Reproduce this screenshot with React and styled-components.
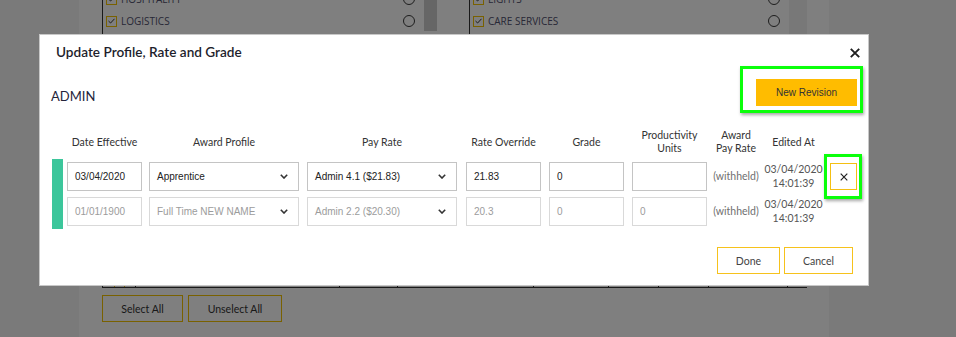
import React from 'react';
import styled, { createGlobalStyle } from 'styled-components';

const Global = createGlobalStyle`
  html, body { margin: 0; padding: 0; }
  body {
    background: #f4f4f4;
    width: 956px;
    height: 337px;
    overflow: hidden;
    font-family: Lato, "Open Sans", sans-serif;
  }
  * { box-sizing: border-box; }
`;

const Page = styled.div`
  position: relative;
  width: 956px;
  height: 337px;
  overflow: hidden;
  display: flex;
`;

/* ---------- background page ---------- */
const Panel = styled.div`
  margin-left: 79px;
  width: 750px;
  height: 337px;
  background: #fff;
  display: flex;
  flex-direction: column;
  padding: 0 0 15px 23px;
`;

const Lists = styled.div`
  display: flex;
  margin-top: -12px;
  height: 70px;
`;

const ListBox = styled.div`
  display: flex;
  width: ${p => p.$w}px;
  border-left: 1px solid #333;
`;

const ListRows = styled.div`
  width: ${p => p.$w}px;
  display: flex;
  flex-direction: column;
`;

const ListRow = styled.div`
  height: 22px;
  display: flex;
  align-items: center;
  padding: 0 9px 0 3px;
`;

const Check = styled.span`
  width: 11px;
  height: 11px;
  border: 1px solid #f2c300;
  display: flex;
  align-items: center;
  justify-content: center;
  flex: none;
`;

const ListLabel = styled.span`
  margin-left: 4px;
  flex: 1;
  font: 10px "Open Sans", sans-serif;
  color: #50506e;
  text-transform: uppercase;
  white-space: nowrap;
`;

const Radio = styled.span`
  width: 12px;
  height: 12px;
  border: 1px solid #3a3a3a;
  border-radius: 50%;
  flex: none;
`;

const ScrollTrack = styled.div`
  width: ${p => p.$w}px;
  align-self: flex-start;
  height: ${p => (p.$h ? `${p.$h}px` : '100%')};
  background: ${p => p.$bg};
`;

const Spacer = styled.div`
  flex: 1;
`;

const Tail = styled.div`
  display: flex;
  width: 705px;
  height: 40px;
  border-bottom: 1px solid #333;
`;

const TailCell = styled.div`
  width: ${p => p.$w}px;
  border-left: 1px solid #333;
  display: flex;
  align-items: flex-end;
  padding-left: ${p => p.$pl || 0}px;
  padding-bottom: ${p => p.$pb || 0}px;
`;

const TailCheck = styled.span`
  width: 11px;
  height: 14px;
  border: 1px solid #f2c300;
  border-bottom: none;
`;

const TailLink = styled.span`
  width: 57px;
  height: 2px;
  background: #6a96e8;
`;

const BgButtons = styled.div`
  display: flex;
  gap: 5px;
  margin-top: 7px;
`;

const BgButton = styled.button`
  width: ${p => p.$w}px;
  height: 27px;
  background: #fff;
  border: 1px solid #f2c300;
  font: 10.5px Lato, sans-serif;
  color: #333;
  padding: 0;
`;

const Overlay = styled.div`
  position: absolute;
  inset: 0;
  background: rgba(0, 0, 0, 0.5);
`;

/* ---------- modal ---------- */
const Modal = styled.div`
  position: absolute;
  left: 39px;
  top: 34px;
  width: 830px;
  height: 252px;
  background: #fff;
  border: 1px solid #c8c8c8;
  padding: 0 11px 0 12px;
  display: flex;
  flex-direction: column;
  font-family: Lato, "Open Sans", sans-serif;
  color: #222;
`;

const TitleBar = styled.div`
  display: flex;
  justify-content: space-between;
  align-items: center;
  height: 20px;
  margin-top: 7px;
`;

const Title = styled.h2`
  margin: 0;
  padding-left: 4px;
  font: 600 13.6px/20px Lato, sans-serif;
  color: #1e1e2c;
`;

const CloseBtn = styled.span`
  display: flex;
  margin: 2px -3px 0 0;
`;

const SubBar = styled.div`
  display: flex;
  justify-content: space-between;
  align-items: flex-end;
  margin-top: 17px;
`;

const Section = styled.div`
  font: 13px/16px Lato, sans-serif;
  color: #24243a;
  margin-left: -1px;
  padding-bottom: 2px;
`;

const NewRevision = styled.button`
  width: 101px;
  height: 27px;
  border: none;
  background: #ffbc00;
  font: 10px "Liberation Sans", Arial, sans-serif;
  color: #333;
  padding: 0;
`;

const cols = '82px 158px 159px 83px 83px 76px 56px 66px 27px';

const HeadRow = styled.div`
  display: grid;
  grid-template-columns: ${cols};
  align-items: center;
  height: 28px;
  margin: 22px 0 0 15px;
`;

const Head = styled.div`
  width: ${p => (p.$w ? `${p.$w}px` : 'auto')};
  padding-right: ${p => p.$pr || 0}px;
  text-align: center;
  font: 10.5px/13px Lato, sans-serif;
  color: #333;
`;

const Group = styled.div`
  display: flex;
  height: 70px;
  margin-top: 3px;
`;

const Bar = styled.div`
  width: 11px;
  background: #3cc69b;
  margin-right: 4px;
`;

const Rows = styled.div`
  display: flex;
  flex-direction: column;
  gap: 6px;
  padding: 3px 0;
`;

const Row = styled.div`
  display: grid;
  grid-template-columns: ${cols};
  align-items: center;
  height: 29px;
`;

const Field = styled.div`
  width: ${p => p.$w}px;
  height: 29px;
  border: 1px solid ${p => (p.$muted ? '#d9d9d9' : '#c4c4c4')};
  padding: 0 10px 0 7px;
  display: flex;
  align-items: center;
  justify-content: space-between;
  font: 10px "Liberation Sans", Arial, sans-serif;
  color: ${p => (p.$muted ? '#9c9c9c' : '#222')};
  white-space: nowrap;
`;

const TextCell = styled.div`
  text-align: center;
  padding-right: ${p => p.$pr || 0}px;
  font: 10.5px/13.5px Lato, sans-serif;
  color: ${p => p.$c};
`;

const RemoveBtn = styled.button`
  width: 27px;
  height: 27px;
  border: 1px solid #f4bf12;
  background: #fff;
  display: flex;
  align-items: center;
  justify-content: center;
  padding: 0;
`;

const Footer = styled.div`
  display: flex;
  justify-content: flex-end;
  gap: 4px;
  margin-top: 18px;
  padding-right: 4px;
`;

const FooterBtn = styled.button`
  width: ${p => p.$w}px;
  height: 27px;
  border: 1px solid #f6c21c;
  background: #fff;
  font: 10.5px Lato, sans-serif;
  color: #444;
  padding: 0;
`;

const Highlight = styled.div`
  position: absolute;
  left: ${p => p.$x}px;
  top: ${p => p.$y}px;
  width: ${p => p.$w}px;
  height: ${p => p.$h}px;
  border: 3px solid #0bff0b;
  box-shadow: 1px 2px 3px rgba(0, 0, 0, 0.35);
  pointer-events: none;
`;

/* ---------- icons ---------- */
const Tick = () => (
  <svg width="7" height="6" viewBox="0 0 7 6">
    <polyline points="0.5,3 2.6,5 6.5,0.8" fill="none" stroke="#333" strokeWidth="1" />
  </svg>
);

const Chevron = () => (
  <svg width="8" height="5" viewBox="0 0 8 5">
    <polyline points="0.8,0.8 4,4 7.2,0.8" fill="none" stroke="#333" strokeWidth="1.6" />
  </svg>
);

const CloseIcon = () => (
  <svg width="10" height="10" viewBox="0 0 10 10">
    <path d="M0.8 0.8 L9.2 9.2 M9.2 0.8 L0.8 9.2" stroke="#1e1e1e" strokeWidth="1.9" />
  </svg>
);

const SmallX = () => (
  <svg width="8" height="8" viewBox="0 0 8 8">
    <path d="M0.7 0.7 L7.3 7.3 M7.3 0.7 L0.7 7.3" stroke="#222" strokeWidth="1.2" />
  </svg>
);

const ListItem = ({ label }) => (
  <ListRow>
    <Check><Tick /></Check>
    <ListLabel>{label}</ListLabel>
    <Radio />
  </ListRow>
);

const rows = [
  {
    muted: false,
    date: '03/04/2020',
    profile: 'Apprentice',
    rate: 'Admin 4.1 ($21.83)',
    override: '21.83',
    grade: '0',
    units: '',
    edited: ['03/04/2020', '14:01:39'],
    removable: true,
  },
  {
    muted: true,
    date: '01/01/1900',
    profile: 'Full Time NEW NAME',
    rate: 'Admin 2.2 ($20.30)',
    override: '20.3',
    grade: '0',
    units: '0',
    edited: ['03/04/2020', '14:01:39'],
    removable: false,
  },
];

const tailCols = [33, 204, 58, 136, 75, 50, 50, 79, 20];

export default function App() {
  return (
    <>
      <Global />
      <Page>
        <Panel>
          <Lists>
            <ListBox $w={367}>
              <ListRows $w={321}>
                <ListItem label="Hospitality" />
                <ListItem label="Logistics" />
              </ListRows>
              <ScrollTrack $w={13} $h={43} $bg="#cccccc" />
            </ListBox>
            <ListBox $w={360}>
              <ListRows $w={319}>
                <ListItem label="Lights" />
                <ListItem label="Care Services" />
              </ListRows>
              <ScrollTrack $w={18} $bg="#f1f1f1" />
            </ListBox>
          </Lists>
          <Spacer />
          <Tail>
            {tailCols.map((w, i) => (
              <TailCell key={i} $w={w} $pl={i === 0 ? 11 : i === 1 ? 7 : 0} $pb={i === 1 ? 2 : 0}>
                {i === 0 && <TailCheck />}
                {i === 1 && <TailLink />}
              </TailCell>
            ))}
          </Tail>
          <BgButtons>
            <BgButton $w={81}>Select All</BgButton>
            <BgButton $w={94}>Unselect All</BgButton>
          </BgButtons>
        </Panel>

        <Overlay />

        <Modal>
          <TitleBar>
            <Title>Update Profile, Rate and Grade</Title>
            <CloseBtn><CloseIcon /></CloseBtn>
          </TitleBar>

          <SubBar>
            <Section>ADMIN</Section>
            <NewRevision>New Revision</NewRevision>
          </SubBar>

          <HeadRow>
            <Head $w={75}>Date Effective</Head>
            <Head $w={150}>Award Profile</Head>
            <Head $w={150}>Pay Rate</Head>
            <Head $w={75}>Rate Override</Head>
            <Head $w={75}>Grade</Head>
            <Head $w={75}>Productivity<br />Units</Head>
            <Head>Award<br />Pay Rate</Head>
            <Head $pr={7}>Edited At</Head>
            <Head />
          </HeadRow>

          <Group>
            <Bar />
            <Rows>
              {rows.map((r, i) => (
                <Row key={i}>
                  <Field $w={75} $muted={r.muted}>{r.date}</Field>
                  <Field $w={150} $muted={r.muted}>{r.profile}<Chevron /></Field>
                  <Field $w={150} $muted={r.muted}>{r.rate}<Chevron /></Field>
                  <Field $w={75} $muted={r.muted}>{r.override}</Field>
                  <Field $w={75} $muted={r.muted}>{r.grade}</Field>
                  <Field $w={75} $muted={r.muted}>{r.units}</Field>
                  <TextCell $c="#707070">(withheld)</TextCell>
                  <TextCell $c="#555" $pr={7}>{r.edited[0]}<br />{r.edited[1]}</TextCell>
                  {r.removable ? <RemoveBtn><SmallX /></RemoveBtn> : <span />}
                </Row>
              ))}
            </Rows>
          </Group>

          <Footer>
            <FooterBtn $w={63}>Done</FooterBtn>
            <FooterBtn $w={69}>Cancel</FooterBtn>
          </Footer>

          <Highlight $x={700} $y={31} $w={123} $h={47} />
          <Highlight $x={784} $y={119} $w={38} $h={45} />
        </Modal>
      </Page>
    </>
  );
}
